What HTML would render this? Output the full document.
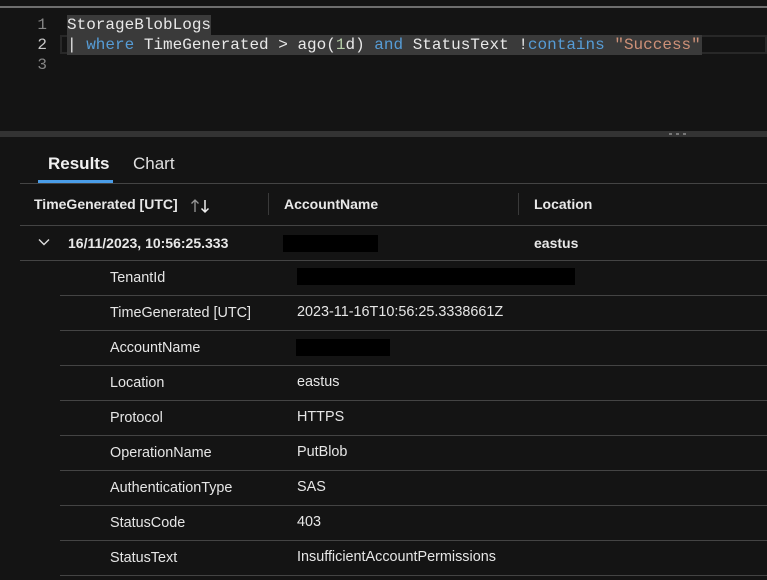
<!DOCTYPE html>
<html><head><meta charset="utf-8"><style>
*{margin:0;padding:0;box-sizing:border-box}
body{width:767px;height:580px;background:#141414;overflow:hidden;position:relative;font-family:"Liberation Sans",sans-serif;color:#e8e8e8}
.a{position:absolute;white-space:nowrap}
.code{font-family:"Liberation Mono",monospace;font-size:16px;line-height:20px}
.ln{color:#858585;width:20px;text-align:right;left:27px}
.hl{position:absolute;height:1px;background:#444}
.lbl{font-size:14.4px;color:#e6e6e6}
.blk{position:absolute;background:#000}
</style></head><body>
<div class="a" style="left:0;top:6px;width:767px;height:2px;background:#6e6e6e"></div>
<div class="a" style="left:60px;top:35px;width:707px;height:19px;border:2px solid #282828"></div>
<div class="a" style="left:67px;top:15px;width:144px;height:20px;background:#3a3a3a"></div>
<div class="a" style="left:67px;top:35px;width:635px;height:20px;background:#3a3a3a"></div>
<div class="a code ln" style="top:15px">1</div>
<div class="a code ln" style="top:35px;color:#c6c6c6">2</div>
<div class="a code ln" style="top:55px">3</div>
<div class="a code" style="left:67px;top:15px;color:#e8e8e8">StorageBlobLogs</div>
<div class="a code" style="left:67px;top:35px;color:#e8e8e8">| <span style="color:#569cd6">where</span> TimeGenerated &gt; ago(<span style="color:#b5cea8">1</span>d) <span style="color:#569cd6">and</span> StatusText !<span style="color:#569cd6">contains</span> <span style="color:#ce9178">"Success"</span></div>
<div class="a" style="left:0;top:131px;width:767px;height:6px;background:#333"></div>
<div class="a" style="left:669px;top:133px;width:3px;height:2px;background:#777"></div>
<div class="a" style="left:676px;top:133px;width:3px;height:2px;background:#777"></div>
<div class="a" style="left:683px;top:133px;width:3px;height:2px;background:#777"></div>
<div class="a" style="left:48px;top:154px;font-size:17px;font-weight:bold;color:#f0f0f0">Results</div>
<div class="a" style="left:133px;top:154px;font-size:17px;color:#e0e0e0">Chart</div>
<div class="a" style="left:38px;top:180px;width:75px;height:3px;background:#4a9de8"></div>
<div class="hl" style="left:20px;top:183px;width:747px"></div>
<div class="a" style="left:34px;top:196px;font-size:14px;font-weight:bold">TimeGenerated [UTC]</div>
<svg class="a" style="left:190px;top:197px" width="22" height="18"><path d="M5 15V3M1.5 6.5L5 3L8.5 6.5" stroke="#999" stroke-width="1.3" fill="none"/><path d="M15 3V15M11.5 11.5L15 15L18.5 11.5" stroke="#eee" stroke-width="1.5" fill="none"/></svg>
<div class="a" style="left:268px;top:193px;width:1px;height:22px;background:#3a3a3a"></div>
<div class="a" style="left:284px;top:196px;font-size:14px;font-weight:bold">AccountName</div>
<div class="a" style="left:518px;top:193px;width:1px;height:22px;background:#3a3a3a"></div>
<div class="a" style="left:534px;top:196px;font-size:14px;font-weight:bold">Location</div>
<div class="hl" style="left:20px;top:225px;width:747px"></div>
<svg class="a" style="left:38px;top:238px" width="12" height="8"><path d="M1 1.5L6 6.5L11 1.5" stroke="#ddd" stroke-width="1.4" fill="none"/></svg>
<div class="a" style="left:68px;top:235px;font-size:14px;font-weight:bold">16/11/2023, 10:56:25.333</div>
<div class="blk" style="left:283px;top:235px;width:95px;height:17px"></div>
<div class="a" style="left:534px;top:235px;font-size:14px;font-weight:bold">eastus</div>
<div class="hl" style="left:20px;top:260px;width:747px"></div>
<div class="a lbl" style="left:110px;top:270px">TenantId</div><div class="blk" style="left:297px;top:268px;width:278px;height:17px"></div>
<div class="hl" style="left:60px;top:295px;width:707px"></div>
<div class="a lbl" style="left:110px;top:305px">TimeGenerated [UTC]</div><div class="a lbl" style="left:297px;top:304px">2023-11-16T10:56:25.3338661Z</div>
<div class="hl" style="left:60px;top:330px;width:707px"></div>
<div class="a lbl" style="left:110px;top:340px">AccountName</div><div class="blk" style="left:296px;top:339px;width:94px;height:17px"></div>
<div class="hl" style="left:60px;top:365px;width:707px"></div>
<div class="a lbl" style="left:110px;top:375px">Location</div><div class="a lbl" style="left:297px;top:374px">eastus</div>
<div class="hl" style="left:60px;top:400px;width:707px"></div>
<div class="a lbl" style="left:110px;top:410px">Protocol</div><div class="a lbl" style="left:297px;top:409px">HTTPS</div>
<div class="hl" style="left:60px;top:435px;width:707px"></div>
<div class="a lbl" style="left:110px;top:445px">OperationName</div><div class="a lbl" style="left:297px;top:444px">PutBlob</div>
<div class="hl" style="left:60px;top:470px;width:707px"></div>
<div class="a lbl" style="left:110px;top:480px">AuthenticationType</div><div class="a lbl" style="left:297px;top:479px">SAS</div>
<div class="hl" style="left:60px;top:505px;width:707px"></div>
<div class="a lbl" style="left:110px;top:515px">StatusCode</div><div class="a lbl" style="left:297px;top:514px">403</div>
<div class="hl" style="left:60px;top:540px;width:707px"></div>
<div class="a lbl" style="left:110px;top:550px">StatusText</div><div class="a lbl" style="left:297px;top:549px">InsufficientAccountPermissions</div>
<div class="hl" style="left:60px;top:575px;width:707px"></div>
</body></html>
